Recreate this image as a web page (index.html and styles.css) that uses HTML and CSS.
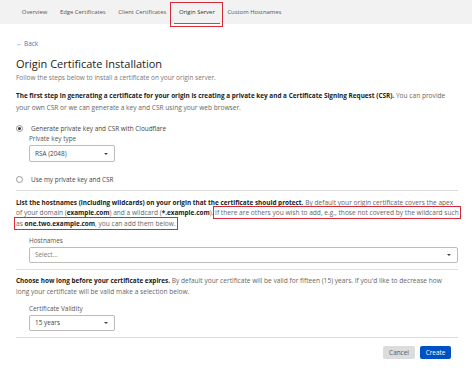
FILE: index.html
```html
<!DOCTYPE html>
<html>
<head>
<meta charset="utf-8">
<link rel="stylesheet" href="styles.css">
</head>
<body>
<nav class="tabs">
  <a class="tab">Overview</a>
  <a class="tab">Edge Certificates</a>
  <a class="tab">Client Certificates</a>
  <a class="tab active">Origin Server</a>
  <a class="tab">Custom Hostnames</a>
</nav>
<main class="page">
  <a class="back">&larr; Back</a>
  <h1 class="title">Origin Certificate Installation</h1>
  <p class="subtitle">Follow the steps below to install a certificate on your origin server.</p>

  <p class="para first"><b>The first step in generating a certificate for your origin is creating a private key and a Certificate Signing Request (CSR).</b> You can provide<br>your own CSR or we can generate a key and CSR using your web browser.</p>

  <div class="options">
    <label class="radio-row"><span class="radio checked"></span>Generate private key and CSR with Cloudflare</label>
    <div class="field tight">
      <div class="field-label">Private key type</div>
      <div class="select small tall"><span>RSA (2048)</span><span class="caret"></span></div>
    </div>
    <label class="radio-row second"><span class="radio"></span>Use my private key and CSR</label>
  </div>

  <hr class="sep">

  <p class="para"><b>List the hostnames (including wildcards) on your origin that the certificate should protect.</b> By default your origin certificate covers the apex<br>of your domain (<b>example.com</b>) and a wildcard (<b>*.example.com</b>). <span class="hl">If there are others you wish to add, e.g., those not covered by the wildcard such</span><br><span class="hl">as <b>one.two.example.com</b>, you can add them below.</span></p>

  <div class="field">
    <div class="field-label">Hostnames</div>
    <div class="select wide"><span class="placeholder">Select...</span><span class="caret"></span></div>
  </div>

  <hr class="sep">

  <p class="para"><b>Choose how long before your certificate expires.</b> By default your certificate will be valid for fifteen (15) years. If you'd like to decrease how<br>long your certificate will be valid make a selection below.</p>

  <div class="field">
    <div class="field-label">Certificate Validity</div>
    <div class="select small"><span>15 years</span><span class="caret"></span></div>
  </div>

  <hr class="sep">

  <div class="actions">
    <button class="btn cancel">Cancel</button>
    <button class="btn create">Create</button>
  </div>
</main>
</body>
</html>
```
FILE: styles.css
```css
* { box-sizing: border-box; }
body {
  margin: 0;
  font-family: "Open Sans", "Noto Sans", sans-serif;
  font-size: 6.4px;
  color: #555;
  background: #fff;
}
.tabs {
  display: flex;
  height: 24px;
  background: #f2f2f2;
  margin-right: 2px;
  padding-left: 15.5px;
}
.tab {
  position: relative;
  display: flex;
  align-items: center;
  padding: 0 6.3px;
  color: #555;
  font-size: 5.9px;
}
.tab.active {
  color: #333;
}
.tab.active::before {
  content: "";
  position: absolute;
  left: 1px; right: 1px; bottom: 0;
  height: 1.5px;
  background: #4a74b8;
}
.tab.active::after {
  content: "";
  position: absolute;
  left: -3px; right: -1.5px; top: 2px; bottom: -3px;
  border: 1.5px solid #d52b39;
}
.page {
  padding: 13px 10px 0 16px;
}
.back {
  display: block;
  color: #3b76c8;
  margin: 2px 0 0;
}
.title {
  margin: 8px 0 0;
  font-size: 11px;
  font-weight: 500;
  color: #222;
}
.subtitle {
  margin: 2px 0 0;
  color: #777;
  font-size: 6.5px;
}
.para {
  margin: 6.5px 0 0;
  line-height: 10.8px;
  color: #666;
  font-size: 6.6px;
}
.para.first { margin-top: 8px; line-height: 11.5px; }
.para b { color: #222; font-size: 0.97em; }
.options { margin-top: 10.5px; }
.radio-row {
  display: flex;
  align-items: center;
  gap: 8px;
  color: #444;
}
.radio {
  width: 7px; height: 7px;
  border: 1px solid #999;
  border-radius: 50%;
  display: inline-block;
  position: relative;
}
.radio.checked::after {
  content: "";
  position: absolute;
  left: 1px; top: 1px;
  width: 3px; height: 3px;
  border-radius: 50%;
  background: #333;
}
.radio-row.second { margin-top: 13px; }
.field { padding-left: 13px; margin-top: 6px; }
.field.tight { margin-top: 1.5px; }
.field-label { color: #555; margin-bottom: 2px; }
.select {
  display: flex;
  align-items: center;
  justify-content: space-between;
  height: 16px;
  border: 1px solid #bbb;
  border-radius: 2px;
  padding: 0 6px 0 5px;
  color: #444;
}
.select.tall { height: 17px; }
.select.small { width: 86px; }
.select.wide { width: 429px; }
.placeholder { color: #777; }
.caret {
  width: 0; height: 0;
  border-left: 2px solid transparent;
  border-right: 2px solid transparent;
  border-top: 2.5px solid #444;
}
.sep {
  border: 0;
  border-top: 1px solid #ddd;
  margin: 6px 0 0;
  width: 442px;
}
.hl {
  outline: 1.5px solid #d52b39;
  outline-offset: 1.2px;
}
.actions {
  display: flex;
  justify-content: flex-end;
  gap: 5px;
  width: 442px;
  padding-right: 7px;
  margin-top: 8px;
}
.btn {
  font-family: inherit;
  font-size: 6.4px;
  border: 0;
  border-radius: 2px;
  height: 13px;
  width: 32px;
  padding: 0;
}
.cancel { background: #dcdcdc; color: #555; }
.create { background: #0051c3; color: #fff; width: 31px; }
```
